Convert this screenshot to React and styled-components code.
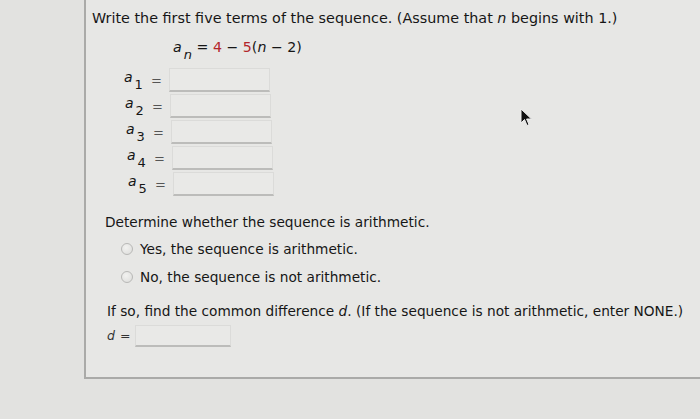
import React from "react";
import styled, { createGlobalStyle } from "styled-components";

const GlobalStyle = createGlobalStyle`
  html, body {
    margin: 0;
    padding: 0;
    width: 700px;
    height: 419px;
    overflow: hidden;
    background: #e2e2e0;
  }
  body {
    font-family: "DejaVu Sans", Verdana, sans-serif;
    color: #161616;
  }
`;

const Page = styled.div`
  width: 700px;
  height: 419px;
  padding: 0 0 0 84px;
  box-sizing: border-box;
`;

const Panel = styled.div`
  height: 379px;
  box-sizing: border-box;
  border-left: 2px solid #aaaaa8;
  border-bottom: 2px solid #aaaaa8;
  background: #e7e7e5;
  padding: 8px 0 0 6px;
  font-size: 13.7px;
`;

const Question = styled.p`
  margin: 0;
  font-size: 14.35px;
  line-height: 20px;
`;

const Formula = styled.div`
  margin: 9px 0 0 81px;
  font-size: 14.2px;
  line-height: 20px;
`;

const Red = styled.span`
  color: #b3262a;
`;

const Var = styled.i`
  font-style: italic;
`;

const Sub = styled.sub`
  font-size: 13px;
  vertical-align: -7px;
  margin-left: 2px;
  line-height: 0;
`;

const Terms = styled.div`
  margin: 11px 0 0 32px;
  display: flex;
  flex-direction: column;
  gap: 2px;
`;

const TermRow = styled.div`
  display: flex;
  align-items: center;
  height: 24px;
  padding-left: ${(p) => p.$shift}px;
`;

const Label = styled.span`
  width: 27px;
  font-size: 14px;
  position: relative;
  top: -3px;
`;

const Eq = styled.span`
  width: 18px;
  font-size: 13px;
  color: #555;
`;

const Box = styled.span`
  display: inline-block;
  width: ${(p) => p.$w || 101}px;
  height: ${(p) => p.$h || 24}px;
  box-sizing: border-box;
  background: #e9e9e7;
  border: 1px solid #dbdbd9;
  border-bottom: 2px solid #bcbcba;
`;

const Section = styled.div`
  margin: ${(p) => p.$top}px 0 0 ${(p) => p.$left}px;
  line-height: 20px;
`;

const Options = styled.div`
  display: flex;
  flex-direction: column;
  gap: 8px;
  margin: 7px 0 0 16px;
`;

const Option = styled.label`
  display: flex;
  align-items: center;
  gap: 7px;
  line-height: 20px;
`;

const Radio = styled.span`
  width: 10px;
  height: 10px;
  border-radius: 50%;
  border: 1px solid #b8b8b6;
  background: radial-gradient(circle at 40% 35%, #f2f2f0, #dcdcda);
`;

const AnswerRow = styled.div`
  display: flex;
  align-items: center;
  gap: 5px;
  margin-top: 4px;
  font-size: 12.5px;
  color: #333;
`;

const Cursor = styled.svg`
  position: absolute;
  left: 520px;
  top: 108px;
`;

const labels = [
  { n: 1, shift: 0 },
  { n: 2, shift: 1 },
  { n: 3, shift: 2 },
  { n: 4, shift: 3 },
  { n: 5, shift: 4 },
];

export default function App() {
  return (
    <>
      <GlobalStyle />
      <Page>
        <Panel>
          <Question>
            Write the first five terms of the sequence. (Assume that <Var>n</Var> begins with 1.)
          </Question>
          <Formula>
            <Var>a</Var>
            <Sub>
              <Var>n</Var>
            </Sub>{" "}
            = <Red>4</Red> − <Red>5</Red>(<Var>n</Var> − 2)
          </Formula>
          <Terms>
            {labels.map((l) => (
              <TermRow key={l.n} $shift={l.shift}>
                <Label>
                  <Var>a</Var>
                  <Sub>{l.n}</Sub>
                </Label>
                <Eq>=</Eq>
                <Box />
              </TermRow>
            ))}
          </Terms>
          <Section $top={16} $left={13}>
            Determine whether the sequence is arithmetic.
            <Options>
              <Option>
                <Radio />
                Yes, the sequence is arithmetic.
              </Option>
              <Option>
                <Radio />
                No, the sequence is not arithmetic.
              </Option>
            </Options>
          </Section>
          <Section $top={14} $left={15}>
            If so, find the common difference <Var>d</Var>. (If the sequence is not arithmetic, enter NONE.)
            <AnswerRow>
              <Var>d</Var> =
              <Box $w={96} $h={22} />
            </AnswerRow>
          </Section>
        </Panel>
      </Page>
      <Cursor width="14" height="20" viewBox="0 0 14 20">
        <path d="M1 1 L1 15 L4.5 11.5 L7 17.5 L9 16.6 L6.6 11 L11.5 11 Z" fill="#111" stroke="#eee" strokeWidth="1" />
      </Cursor>
    </>
  );
}
